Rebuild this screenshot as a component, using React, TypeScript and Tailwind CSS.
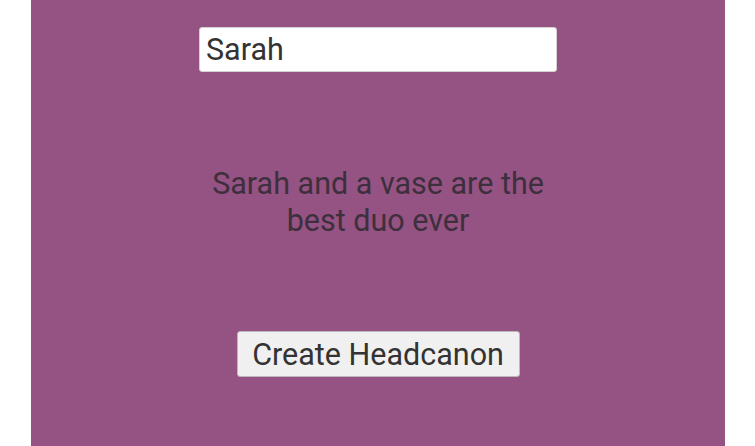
import { useState } from "react";

const App = () => {
    const [name, setName] = useState("Sarah");

    return (
        <div className="w-[755px] h-[446px] bg-white flex font-['Roboto',sans-serif]">
            <main className="ml-[31px] w-[694px] h-full bg-[#945383] flex flex-col items-center">
                <input
                    value={name}
                    onChange={(e) => setName(e.target.value)}
                    className="mt-[27px] w-[358px] h-[45px] px-[6px] bg-white border border-[#d6d0d4] rounded-[3px] text-[30.5px] text-[#333] outline-none"
                />
                <p className="mt-[93px] w-[380px] text-center text-[30.5px] leading-[37px] text-[#3e2f3d]">
                    {name} and a vase are the best duo ever
                </p>
                <button
                    className="mt-[92px] w-[283px] h-[46px] bg-[#f0f0f0] border border-[#bdb6bb] rounded-[3px] text-[30.5px] text-[#333]"
                    onClick={() => {}}
                >
                    Create Headcanon
                </button>
            </main>
        </div>
    );
};

export default App;
